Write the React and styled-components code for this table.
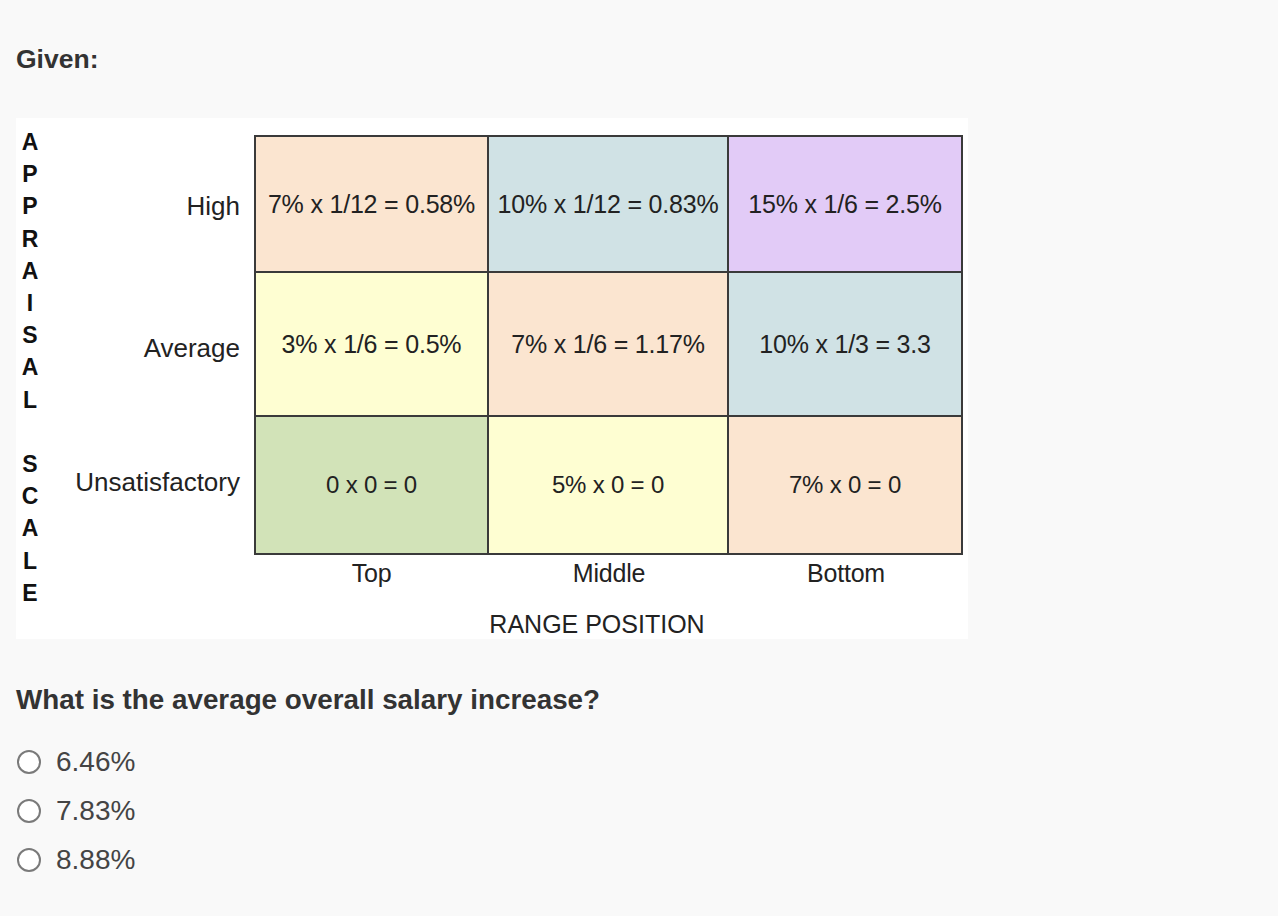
import React from "react";
import styled, { createGlobalStyle } from "styled-components";

const GlobalStyle = createGlobalStyle`
  body {
    margin: 0;
    background: #f9f9f9;
    font-family: "Liberation Sans", Arial, sans-serif;
    color: #333;
  }
`;

const Page = styled.div`
  padding: 43px 16px 40px;
`;

const Heading = styled.div`
  font-size: 26.5px;
  font-weight: 700;
  line-height: 32px;
  color: #333;
`;

const Figure = styled.div`
  margin-top: 43px;
  width: 952px;
  height: 521px;
  background: #fff;
  display: flex;
  box-sizing: border-box;
`;

const AxisLetters = styled.div`
  width: 28px;
  padding-top: 8px;
  display: flex;
  flex-direction: column;
  align-items: center;
  font-size: 23px;
  font-weight: 700;
  line-height: 32.2px;
  color: #111;
`;

const Chart = styled.div`
  padding-top: 17px;
  display: grid;
  grid-template-columns: 210px 235px 240px 234px;
  grid-template-rows: 138px 144px 138px 40px 44px;
  color: #222;
`;

const RowLabel = styled.div`
  display: flex;
  align-items: center;
  justify-content: flex-end;
  padding-right: 14px;
  padding-top: ${(p) => Math.max(p.$shift || 0, 0)}px;
  padding-bottom: ${(p) => Math.max(-(p.$shift || 0), 0)}px;
  font-size: 26px;
  white-space: nowrap;
`;

const Cell = styled.div`
  box-sizing: border-box;
  background: ${(p) => p.$bg};
  border-right: 2px solid #3a3a3a;
  border-bottom: 2px solid #3a3a3a;
  border-left: ${(p) => (p.$first ? "2px solid #3a3a3a" : "none")};
  border-top: ${(p) => (p.$top ? "2px solid #3a3a3a" : "none")};
  display: flex;
  align-items: center;
  justify-content: center;
  font-size: ${(p) => (p.$small ? 24 : 25)}px;
  letter-spacing: -0.2px;
  white-space: nowrap;
`;

const ColLabel = styled.div`
  text-align: center;
  padding-top: 3px;
  font-size: 25px;
  line-height: 30px;
  letter-spacing: -0.2px;
`;

const AxisTitle = styled.div`
  grid-column: 2 / 5;
  text-align: center;
  padding-top: 14px;
  padding-right: 23px;
  font-size: 25px;
  line-height: 30px;
`;

const Question = styled.div`
  margin-top: 45px;
  font-size: 27.8px;
  font-weight: 700;
  line-height: 32px;
  color: #333;
`;

const Options = styled.div`
  margin-top: 21px;
  display: flex;
  flex-direction: column;
`;

const Option = styled.label`
  height: 49px;
  display: flex;
  align-items: center;
  gap: 15px;
  font-size: 28px;
  color: #444;
`;

const Radio = styled.span`
  box-sizing: border-box;
  width: 24px;
  height: 24px;
  margin-left: 1px;
  border-radius: 50%;
  border: 2px solid #7a7a7a;
  background: #fff;
`;

const COLORS = {
  peach: "#fbe5d0",
  blue: "#d0e2e5",
  lilac: "#e2cbf7",
  yellow: "#fefed2",
  green: "#d2e3b8",
};

const rows = [
  {
    label: "High",
    shift: 4,
    cells: [
      ["7% x 1/12 = 0.58%", COLORS.peach],
      ["10% x 1/12 = 0.83%", COLORS.blue],
      ["15% x 1/6 = 2.5%", COLORS.lilac],
    ],
  },
  {
    label: "Average",
    shift: 6,
    cells: [
      ["3% x 1/6 = 0.5%", COLORS.yellow],
      ["7% x 1/6 = 1.17%", COLORS.peach],
      ["10% x 1/3 = 3.3", COLORS.blue],
    ],
  },
  {
    label: "Unsatisfactory",
    shift: -8,
    small: true,
    cells: [
      ["0 x 0 = 0", COLORS.green],
      ["5% x 0 = 0", COLORS.yellow],
      ["7% x 0 = 0", COLORS.peach],
    ],
  },
];

const letters = "APPRAISAL SCALE".split("");

export default function App() {
  return (
    <>
      <GlobalStyle />
      <Page>
        <Heading>Given:</Heading>
        <Figure>
          <AxisLetters>
            {letters.map((ch, i) => (
              <span key={i}>{ch === " " ? "\u00a0" : ch}</span>
            ))}
          </AxisLetters>
          <Chart>
            {rows.map((row, r) => (
              <React.Fragment key={row.label}>
                <RowLabel $shift={row.shift}>{row.label}</RowLabel>
                {row.cells.map(([text, bg], c) => (
                  <Cell
                    key={c}
                    $bg={bg}
                    $first={c === 0}
                    $top={r === 0}
                    $small={row.small}
                  >
                    {text}
                  </Cell>
                ))}
              </React.Fragment>
            ))}
            <div />
            <ColLabel>Top</ColLabel>
            <ColLabel>Middle</ColLabel>
            <ColLabel>Bottom</ColLabel>
            <AxisTitle>RANGE POSITION</AxisTitle>
          </Chart>
        </Figure>
        <Question>What is the average overall salary increase?</Question>
        <Options>
          {["6.46%", "7.83%", "8.88%"].map((o) => (
            <Option key={o}>
              <Radio />
              {o}
            </Option>
          ))}
        </Options>
      </Page>
    </>
  );
}
